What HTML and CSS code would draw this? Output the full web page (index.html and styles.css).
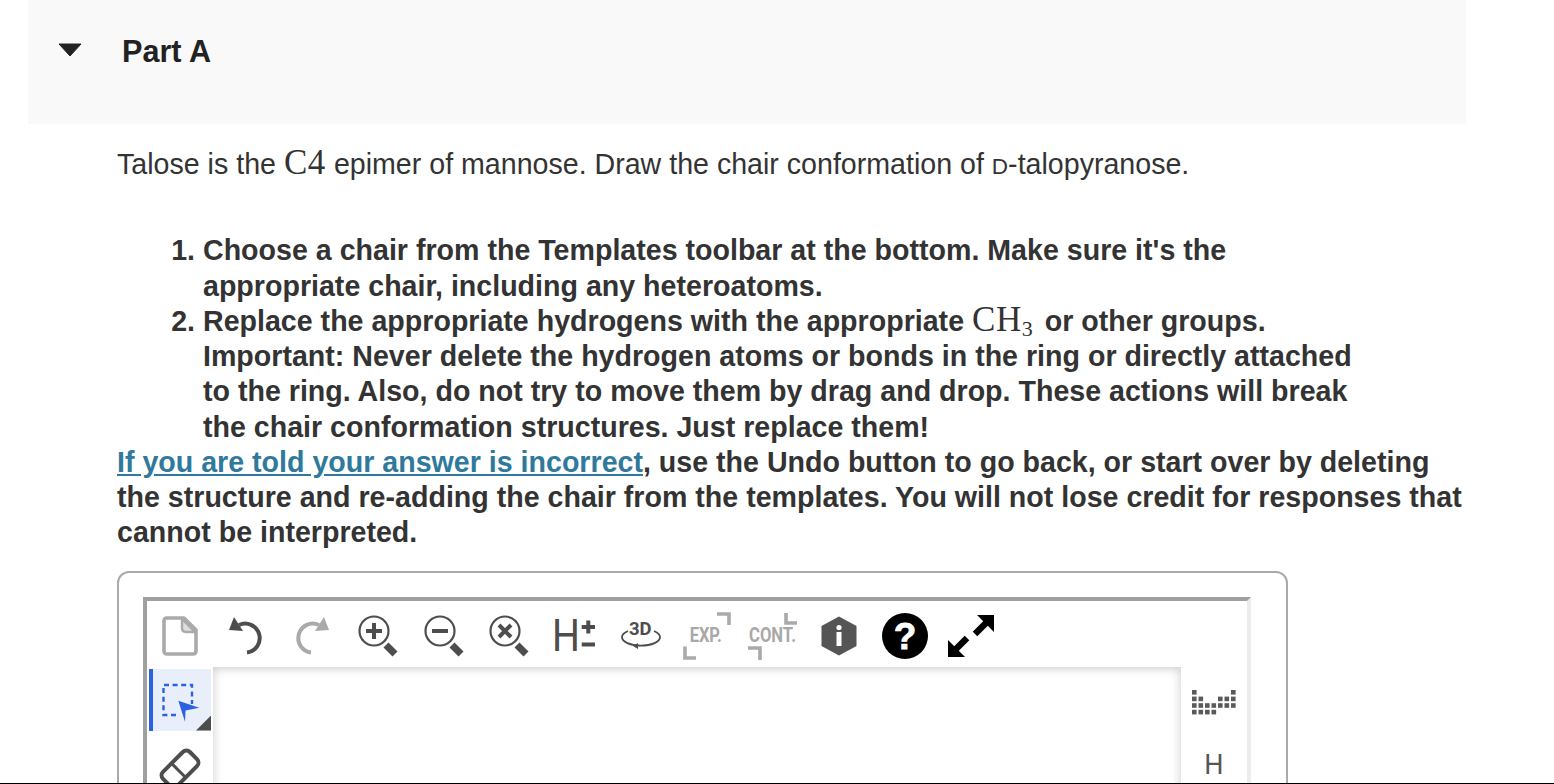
FILE: index.html
```html
<!DOCTYPE html>
<html lang="en">
<head>
<meta charset="utf-8">
<title>Part A</title>
<link rel="stylesheet" href="styles.css">
</head>
<body>
<main class="page">
  <header class="part-head">
    <svg class="caret" width="24" height="14" viewBox="0 0 24 14"><path d="M1 1 H23 L12 13 Z" fill="#222" stroke="#222" stroke-linejoin="round"/></svg>
    <h2 class="part-title">Part A</h2>
  </header>
  <section class="content">
    <p class="intro">Talose is the <span class="math">C4</span> epimer of mannose. Draw the chair conformation of <span class="smallcap">D</span>-talopyranose.</p>
    <div class="steps">
      <ol class="step-list">
        <li>Choose a chair from the Templates toolbar at the bottom. Make sure it's the appropriate chair, including any heteroatoms.</li>
        <li>Replace the appropriate hydrogens with the appropriate <span class="math">CH<span class="math-sub">3</span></span> or other groups. Important: Never delete the hydrogen atoms or bonds in the ring or directly attached to the ring. Also, do not try to move them by drag and drop. These actions will break the chair conformation structures. Just replace them!</li>
      </ol>
      <p class="note"><a class="link" href="#">If you are told your answer is incorrect</a>, use the Undo button to go back, or start over by deleting the structure and re-adding the chair from the templates. You will not lose credit for responses that cannot be interpreted.</p>
    </div>
    <div class="card">
      <div class="sketcher">
        <div class="toolbar">
          <span class="tool"><svg width="36" height="40" viewBox="0 0 36 40"><path d="M5 2 H22 L34 14 V35 Q34 38 31 38 H5 Q2 38 2 35 V5 Q2 2 5 2 Z" fill="#fff" stroke="#aaa" stroke-width="3.6" stroke-linejoin="round"/><path d="M20 3 V12 Q20 16 24 16 H33 Z" fill="#ddd" stroke="#aaa" stroke-width="2.4" stroke-linejoin="round"/></svg></span>
          <span class="tool"><svg width="40" height="40" viewBox="0 0 40 40"><path d="M13 9 A14.5 14.5 0 1 1 21 36.5" fill="none" stroke="#4d4d4d" stroke-width="4"/><path d="M3 14 L8 1 L17 15 Z" fill="#4d4d4d"/></svg></span>
          <span class="tool"><svg width="40" height="40" viewBox="0 0 40 40"><path d="M27 9 A14.5 14.5 0 1 0 19 36.5" fill="none" stroke="#aaa" stroke-width="4"/><path d="M37 14 L32 1 L23 15 Z" fill="#aaa"/></svg></span>
          <span class="tool"><svg width="42" height="42" viewBox="0 0 42 42"><circle cx="17" cy="16" r="14.5" fill="none" stroke="#4d4d4d" stroke-width="2.2"/><path d="M9 16 H25 M17 8 V24" stroke="#4d4d4d" stroke-width="4"/><path d="M29 30 L38 39" stroke="#4d4d4d" stroke-width="7"/></svg></span>
          <span class="tool"><svg width="42" height="42" viewBox="0 0 42 42"><circle cx="17" cy="16" r="14.5" fill="none" stroke="#4d4d4d" stroke-width="2.2"/><path d="M9 16 H25" stroke="#4d4d4d" stroke-width="4"/><path d="M29 30 L38 39" stroke="#4d4d4d" stroke-width="7"/></svg></span>
          <span class="tool"><svg width="42" height="42" viewBox="0 0 42 42"><circle cx="17" cy="16" r="14.5" fill="none" stroke="#4d4d4d" stroke-width="2.2"/><path d="M11 10 L23 22 M23 10 L11 22" stroke="#4d4d4d" stroke-width="4"/><path d="M29 30 L38 39" stroke="#4d4d4d" stroke-width="7"/></svg></span>
          <span class="tool"><svg width="50" height="44" viewBox="0 0 50 44"><text class="svg-h" x="2" y="37" textLength="28" lengthAdjust="spacingAndGlyphs">H</text><path d="M31.7 13 H45 M38.3 6.5 V19.5" stroke="#4d4d4d" stroke-width="4"/><path d="M31.7 30.5 H45" stroke="#4d4d4d" stroke-width="4"/></svg></span>
          <span class="tool"><svg width="42" height="34" viewBox="0 0 42 34"><text class="svg-3d" x="9" y="15.5">3D</text><path d="M8 12 A19 8.5 0 1 0 34 12" fill="none" stroke="#4d4d4d" stroke-width="1.8"/><path d="M13 27 L18 24 V30 Z" fill="#4d4d4d"/></svg></span>
          <span class="tool"><svg width="50" height="50" viewBox="0 0 50 50"><path d="M35 3 H47 V14" fill="none" stroke="#aaa" stroke-width="3.6"/><path d="M3 35.5 V47 H14" fill="none" stroke="#aaa" stroke-width="3.6"/><text class="svg-exp" x="7.7" y="31" textLength="32" lengthAdjust="spacingAndGlyphs">EXP.</text></svg></span>
          <span class="tool"><svg width="54" height="50" viewBox="0 0 54 50"><path d="M40 2 V12 H51" fill="none" stroke="#aaa" stroke-width="3.6"/><path d="M2 37 H14 V49" fill="none" stroke="#aaa" stroke-width="3.6"/><text class="svg-exp" x="3" y="31" textLength="47" lengthAdjust="spacingAndGlyphs">CONT.</text></svg></span>
          <span class="tool"><svg width="38" height="40" viewBox="0 0 38 40"><path d="M19 0.5 L36.5 10 V30 L19 39.5 L1.5 30 V10 Z" fill="#555"/><rect x="16.5" y="16" width="5" height="14" fill="#fff"/><circle cx="19" cy="11.5" r="2.6" fill="#fff"/></svg></span>
          <span class="tool"><svg width="46" height="46" viewBox="0 0 46 46"><circle cx="23" cy="23" r="23" fill="#000"/><text class="svg-q" x="23" y="36">?</text></svg></span>
          <span class="tool"><svg width="48" height="44" viewBox="0 0 48 44"><path d="M30 1 H47 V18 Z" fill="#000"/><path d="M39 9 L28 20" stroke="#000" stroke-width="6.5"/><path d="M1 26 V43 H18 Z" fill="#000"/><path d="M9 35 L20 24" stroke="#000" stroke-width="6.5"/></svg></span>
        </div>
        <div class="work">
          <div class="rail">
            <div class="rail-item rail-active">
              <svg width="46" height="46" viewBox="0 0 46 46"><path d="M17 38 H4.5 V8 H33 V27" fill="none" stroke="#2b62e0" stroke-width="2.4" stroke-dasharray="5 3.6"/><path d="M19.3 23.7 L40.3 30.7 L26.5 33.5 L26 44.7 Z" fill="#2b62e0"/></svg>
              <span class="corner"></span>
            </div>
            <div class="rail-item">
              <svg width="44" height="44" viewBox="0 0 44 44"><g transform="rotate(-45 22 22)"><rect x="3" y="12" width="38" height="20" rx="5" fill="#fff" stroke="#4d4d4d" stroke-width="4"/><path d="M20 12 V32" stroke="#4d4d4d" stroke-width="3"/></g></svg>
            </div>
          </div>
          <div class="canvas"></div>
          <div class="elements">
            <svg class="ptable" width="46" height="27" viewBox="0 0 46 27" fill="#5a5a5a">
              <rect x="0" y="0" width="4.6" height="4.6"/><rect x="39" y="0" width="4.6" height="4.6"/>
              <rect x="0" y="6.6" width="4.6" height="4.6"/><rect x="6.5" y="6.6" width="4.6" height="4.6"/><rect x="26" y="6.6" width="4.6" height="4.6"/><rect x="32.5" y="6.6" width="4.6" height="4.6"/><rect x="39" y="6.6" width="4.6" height="4.6"/>
              <rect x="0" y="13.2" width="4.6" height="4.6"/><rect x="6.5" y="13.2" width="4.6" height="4.6"/><rect x="13" y="13.2" width="4.6" height="4.6"/><rect x="19.5" y="13.2" width="4.6" height="4.6"/><rect x="26" y="13.2" width="4.6" height="4.6"/><rect x="32.5" y="13.2" width="4.6" height="4.6"/><rect x="39" y="13.2" width="4.6" height="4.6"/>
              <rect x="0" y="19.8" width="4.6" height="4.6"/><rect x="6.5" y="19.8" width="4.6" height="4.6"/><rect x="13" y="19.8" width="4.6" height="4.6"/><rect x="19.5" y="19.8" width="4.6" height="4.6"/>
            </svg>
            <span class="el-h">H</span>
          </div>
        </div>
      </div>
    </div>
  </section>
</main>
<div class="edge"></div>
</body>
</html>
```
FILE: styles.css
```css
* { box-sizing: border-box; }
html, body { margin: 0; padding: 0; background: #fff; }
body {
  height: 784px;
  overflow: hidden;
  display: flex;
  flex-direction: column;
  font-family: "Liberation Sans", Arial, sans-serif;
  color: #333;
}
.page { flex: 1; min-height: 0; overflow: hidden; }
.edge { height: 1px; background: #000; flex: none; }

.part-head {
  margin: 0 88px 0 28px;
  height: 124px;
  background: #f9f9f9;
  display: flex;
  align-items: flex-start;
  padding: 33px 0 0 31px;
}
.caret { margin-top: 10px; margin-left: -1px; flex: none; }
.part-title { margin: 0 0 0 40px; font-size: 30.6px; line-height: 36px; font-weight: 700; color: #222; }

.content { margin: 0 88px 0 117px; }
.intro { margin: 23px 0 0; font-size: 28.6px; line-height: 35.25px; }
.math { font-family: "Liberation Serif", "DejaVu Serif", serif; font-size: 35px; font-weight: 400; line-height: 0; letter-spacing: .6px; }
.math-sub { font-size: 22px; line-height: 0; vertical-align: -5px; margin-right: 4px; letter-spacing: 0; }
.smallcap { font-size: 22.5px; }

.steps { margin-top: 49px; font-size: 28.6px; line-height: 35.25px; font-weight: 700; }
.step-list { margin: 0; padding: 0 96px 0 86px; }
.note { margin: 0; }
.link { color: #2f7a9c; text-decoration: underline; }

.card {
  margin-top: 20px;
  width: 1171px;
  height: 400px;
  border: 2px solid #aaa;
  border-radius: 12px;
  padding: 24px 35px 0 24px;
}
.sketcher {
  height: 400px;
  border-top: 4px solid #a0a0a0;
  border-left: 4px solid #a0a0a0;
  border-right: 4px solid #ececec;
  background: #fff;
}
.toolbar { display: flex; height: 66px; padding-top: 5px; align-items: center; }
.tool { flex: 0 0 65.9px; display: flex; align-items: center; justify-content: center; }
.tool svg { overflow: visible; }
.svg-h { font-family: Roboto, sans-serif; font-size: 44px; fill: #4d4d4d; }
.svg-3d { font-family: Roboto, sans-serif; font-weight: 700; font-size: 18.5px; fill: #4d4d4d; }
.svg-exp { font-family: Roboto, sans-serif; font-weight: 700; font-size: 20px; fill: #a8a8a8; }
.svg-q { font-family: "Liberation Sans", sans-serif; font-weight: 700; font-size: 37px; fill: #fff; stroke: #fff; stroke-width: .8px; text-anchor: middle; }

.work { display: flex; height: 330px; }
.rail { flex: 0 0 66px; padding: 2px 0 0 2px; }
.rail-item { height: 62px; width: 62px; display: flex; align-items: center; justify-content: center; position: relative; }
.rail-item + .rail-item { margin-top: 16px; height: 44px; align-items: flex-start; }
.rail-active { background: #e8eefa; border-left: 4px solid #2b62e0; }
.corner {
  position: absolute; right: 0; bottom: 0; width: 15px; height: 15px;
  background: #4d4d4d; clip-path: polygon(100% 0, 100% 100%, 0 100%);
}
.canvas {
  flex: 0 0 968px;
  background: #fff;
  box-shadow: inset 0 4px 8px rgba(0,0,0,.08), inset 4px 0 8px rgba(0,0,0,.07), inset -4px 0 8px rgba(0,0,0,.07);
}
.elements { flex: 1; display: flex; flex-direction: column; align-items: center; padding-top: 23px; }
.ptable { display: block; margin-left: 2px; }
.el-h { margin-top: 32px; font-family: Roboto, sans-serif; font-size: 27px; line-height: 32px; color: #555; }
```
